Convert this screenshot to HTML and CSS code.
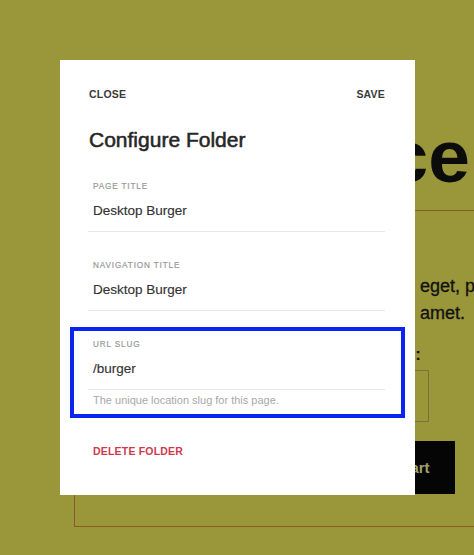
FILE: index.html
```html
<!DOCTYPE html>
<html lang="en">
<head>
    <meta charset="UTF-8">
    <meta name="viewport" content="width=device-width, initial-scale=1.0">
    <title>Configure Folder</title>
    <link rel="stylesheet" href="styles.css">
</head>
<body>
    <!-- page behind the dialog -->
    <div class="site">
        <h1 class="site-title">Space</h1>
        <div class="panel">
            <p class="intro">eget, pretium<br>amet.</p>
            <form class="signup">
                <label class="signup-label">Email:</label>
                <div class="signup-input"></div>
                <div class="signup-btn">Start</div>
            </form>
        </div>
    </div>

    <!-- folder settings dialog -->
    <div class="modal">
        <div class="modal-header">
            <span class="modal-action">CLOSE</span>
            <span class="modal-action">SAVE</span>
        </div>
        <h2 class="modal-title">Configure Folder</h2>

        <div class="field">
            <div class="field-label">PAGE TITLE</div>
            <div class="field-value">Desktop Burger</div>
        </div>
        <div class="field">
            <div class="field-label">NAVIGATION TITLE</div>
            <div class="field-value">Desktop Burger</div>
        </div>

        <div class="highlight">
            <div class="field field-first">
                <div class="field-label">URL SLUG</div>
                <div class="field-value">/burger</div>
            </div>
            <div class="field-help">The unique location slug for this page.</div>
        </div>

        <div class="delete">DELETE FOLDER</div>
    </div>
</body>
</html>
```

FILE: styles.css
```css
body {
    font-family: 'Liberation Sans', Arial, sans-serif;
    margin: 0;
    width: 474px;
    height: 555px;
    overflow: hidden;
    position: relative;
    background-color: #9a973a;
}

/* background page */
.site {
    padding-top: 119px;
}
.site-title {
    margin: 0;
    font-size: 75px;
    line-height: 74px;
    font-weight: 700;
    color: #0c0c0a;
    text-align: right;
    padding-right: 4px;
    white-space: nowrap;
}
.panel {
    margin: 17px 0 0 74px;
    width: 440px;
    height: 315px;
    border: 1px solid #8c5a28;
}
.intro {
    margin: 62px 0 0 345px;
    font-size: 18px;
    line-height: 27px;
    color: #111;
    -webkit-text-stroke: 0.3px #111;
    white-space: nowrap;
}
.signup {
    margin: 18px 0 0 255px;
    width: 125px;
    display: flex;
    flex-direction: column;
}
.signup-label {
    width: 91px;
    text-align: right;
    font-size: 17px;
    line-height: 20px;
    font-weight: 700;
    color: #111;
}
.signup-input {
    margin-top: 5px;
    width: 99px;
    height: 52px;
    box-sizing: border-box;
    border: 1px solid #76733a;
}
.signup-btn {
    margin: 19px 0 0 auto;
    width: 90px;
    height: 53px;
    box-sizing: border-box;
    padding-left: 5px;
    background-color: #050505;
    color: #a3a06a;
    font-size: 15px;
    font-weight: 700;
    display: flex;
    align-items: center;
    justify-content: center;
}

/* dialog */
.modal {
    position: absolute;
    top: 60px;
    left: 60px;
    width: 355px;
    height: 435px;
    box-sizing: border-box;
    padding: 27px 30px 0 28px;
    background-color: #fff;
    color: #333;
}
.modal-header {
    display: flex;
    justify-content: space-between;
    padding-left: 1px;
}
.modal-action {
    font-size: 10.5px;
    line-height: 14px;
    font-weight: 700;
    letter-spacing: 0.2px;
    color: #3a3a3a;
}
.modal-title {
    margin: 25px 0 0 1px;
    font-size: 21px;
    line-height: 28px;
    font-weight: 400;
    color: #262626;
    -webkit-text-stroke: 0.55px #262626;
}
.field {
    margin-top: 28px;
    padding: 0 0 10px 5px;
    border-bottom: 1px solid #e8e8e8;
}
.modal-title + .field {
    margin-top: 27px;
}
.field-first {
    margin-top: 0;
}
.field-label {
    font-size: 8.2px;
    line-height: 12px;
    letter-spacing: 0.85px;
    color: #999;
    -webkit-text-stroke: 0.2px #999;
}
.field-value {
    margin-top: 8px;
    font-size: 13.5px;
    line-height: 20px;
    color: #333;
    -webkit-text-stroke: 0.15px #333;
}
.field-help {
    margin-top: 3px;
    padding-left: 5px;
    font-size: 11px;
    line-height: 14px;
    color: #a8a8a8;
}
.highlight {
    margin: 16px -20px 0 -18px;
    padding: 8px 16px 7px 14px;
    border: 4px solid #0b24f2;
}
.delete {
    margin-top: 26px;
    padding-left: 5px;
    font-size: 10.5px;
    line-height: 14px;
    font-weight: 700;
    letter-spacing: 0.2px;
    color: #cc3b4b;
}
```
